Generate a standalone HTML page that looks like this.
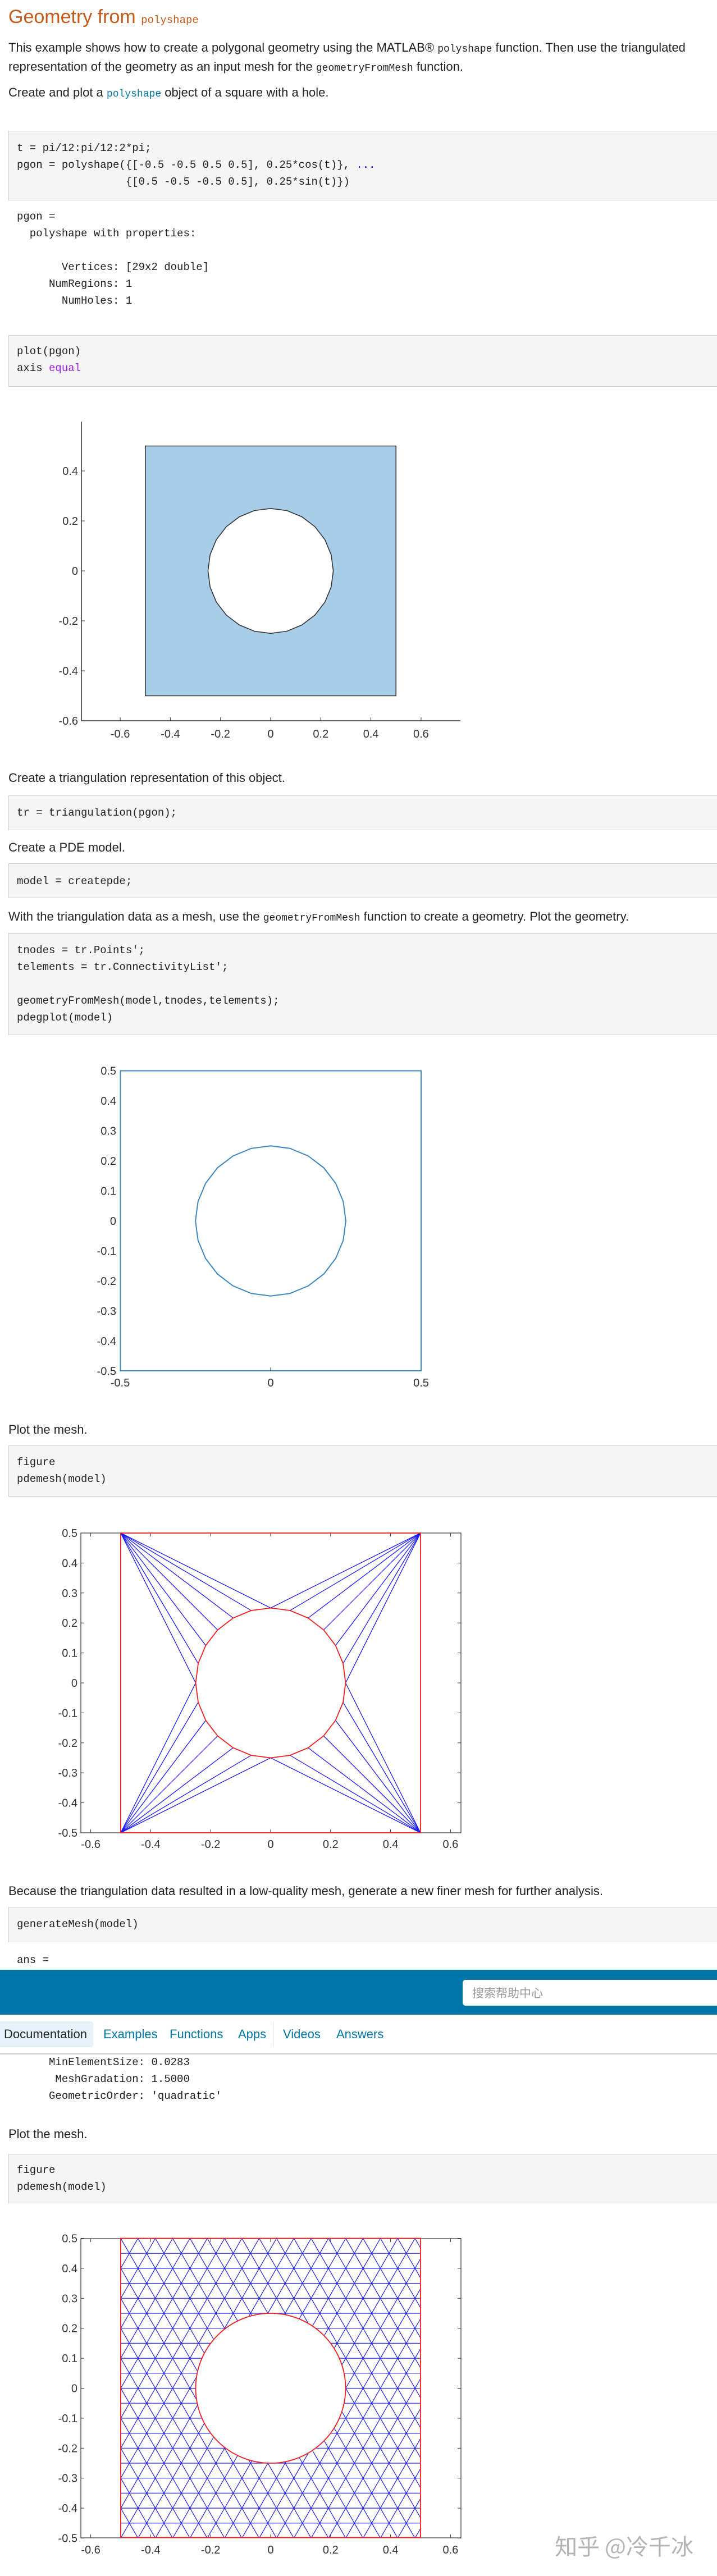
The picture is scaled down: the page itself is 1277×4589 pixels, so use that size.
<!DOCTYPE html>
<html><head><meta charset="utf-8">
<style>
*{margin:0;padding:0;box-sizing:border-box}
html,body{width:1277px;height:4589px;background:#fff;overflow:hidden}
body{position:relative;font-family:"Liberation Sans","Noto Sans CJK SC",sans-serif;color:#222}
.t{position:absolute;left:15px;font-size:22px;line-height:30px;white-space:nowrap}
.m{font-family:"Liberation Mono",monospace;font-size:18px}
.box{position:absolute;left:15px;width:1300px;background:#f5f5f5;border:1px solid #cfcfcf}
.c{position:absolute;left:30px;font-family:"Liberation Mono",monospace;font-size:19px;line-height:30px;white-space:pre;color:#222}
#svg{position:absolute;left:0;top:0}
</style></head><body>

<div style="position:absolute;left:15px;top:8px;font-size:34px;line-height:44px;color:#c45a1a;white-space:nowrap">Geometry from <span style="font-family:'Liberation Mono',monospace;font-size:19px">polyshape</span></div>
<div class="t" style="top:70px">This example shows how to create a polygonal geometry using the MATLAB® <span class="m">polyshape</span> function. Then use the triangulated</div>
<div class="t" style="top:104px">representation of the geometry as an input mesh for the <span class="m">geometryFromMesh</span> function.</div>
<div class="t" style="top:150px">Create and plot a <span class="m" style="color:#0076a8">polyshape</span> object of a square with a hole.</div>

<div class="box" style="top:233px;height:124px"></div>
<div class="c" style="top:249px">t = pi/12:pi/12:2*pi;
pgon = polyshape({[-0.5 -0.5 0.5 0.5], 0.25*cos(t)}, <span style="color:#0000ff">...</span>
                 {[0.5 -0.5 -0.5 0.5], 0.25*sin(t)})</div>
<div class="c" style="top:371px">pgon = 
  polyshape with properties:

       Vertices: [29x2 double]
     NumRegions: 1
       NumHoles: 1</div>

<div class="box" style="top:597px;height:92px"></div>
<div class="c" style="top:611px">plot(pgon)
axis <span style="color:#a020f0">equal</span></div>

<div class="t" style="top:1371px">Create a triangulation representation of this object.</div>
<div class="box" style="top:1417px;height:62px"></div>
<div class="c" style="top:1433px">tr = triangulation(pgon);</div>
<div class="t" style="top:1495px">Create a PDE model.</div>
<div class="box" style="top:1538px;height:62px"></div>
<div class="c" style="top:1555px">model = createpde;</div>
<div class="t" style="top:1618px">With the triangulation data as a mesh, use the <span class="m">geometryFromMesh</span> function to create a geometry. Plot the geometry.</div>
<div class="box" style="top:1662px;height:182px"></div>
<div class="c" style="top:1678px">tnodes = tr.Points';
telements = tr.ConnectivityList';

geometryFromMesh(model,tnodes,telements);
pdegplot(model)</div>

<div class="t" style="top:2532px">Plot the mesh.</div>
<div class="box" style="top:2575px;height:91px"></div>
<div class="c" style="top:2590px">figure
pdemesh(model)</div>

<div class="t" style="top:3354px">Because the triangulation data resulted in a low-quality mesh, generate a new finer mesh for further analysis.</div>
<div class="box" style="top:3397px;height:63px"></div>
<div class="c" style="top:3413px">generateMesh(model)</div>
<div class="c" style="top:3477px">ans = </div>

<div style="position:absolute;left:0;top:3509px;width:1277px;height:80px;background:#0076a8"></div>
<div style="position:absolute;left:824px;top:3527px;width:470px;height:46px;background:#fff;border-radius:5px"></div>
<div style="position:absolute;left:841px;top:3535px;font-size:21px;line-height:30px;color:#999;font-family:'Noto Sans CJK SC',sans-serif">搜索帮助中心</div>
<div style="position:absolute;left:0;top:3589px;width:1277px;height:69px;background:#fff"></div>
<div style="position:absolute;left:0;top:3601px;width:166px;height:46px;background:#e6f2fa;border-radius:0 4px 4px 0"></div>
<div style="position:absolute;left:486px;top:3601px;width:1px;height:46px;background:#e0e0e0"></div>
<div style="position:absolute;top:3609px;left:7px;font-size:22px;line-height:30px;color:#222;white-space:nowrap">Documentation</div>
<div style="position:absolute;top:3609px;left:184px;font-size:22px;line-height:30px;color:#0076a8">Examples</div>
<div style="position:absolute;top:3609px;left:302px;font-size:22px;line-height:30px;color:#0076a8">Functions</div>
<div style="position:absolute;top:3609px;left:424px;font-size:22px;line-height:30px;color:#0076a8">Apps</div>
<div style="position:absolute;top:3609px;left:504px;font-size:22px;line-height:30px;color:#0076a8">Videos</div>
<div style="position:absolute;top:3609px;left:599px;font-size:22px;line-height:30px;color:#0076a8">Answers</div>
<div style="position:absolute;left:0;top:3657px;width:1277px;height:4px;background:linear-gradient(#c8c8c8,#f4f4f4)"></div>
<div class="c" style="top:3659px">     MinElementSize: 0.0283
      MeshGradation: 1.5000
     GeometricOrder: 'quadratic'</div>

<div class="t" style="top:3787px">Plot the mesh.</div>
<div class="box" style="top:3837px;height:88px"></div>
<div class="c" style="top:3851px">figure
pdemesh(model)</div>

<svg id="svg" width="1277" height="4589" xmlns="http://www.w3.org/2000/svg" font-family="Liberation Sans, sans-serif">
<defs>
<clipPath id="sq4"><rect x="215" y="3988" width="534" height="533"/></clipPath>
</defs>
<g id="g1"></g>
<text x="1235" y="4551" text-anchor="end" font-size="40" fill="#b4b4b4" font-family="Noto Sans CJK SC, sans-serif">知乎 @冷千冰</text>
</svg>

<script>
(function(){
var NS="http://www.w3.org/2000/svg",g=document.getElementById('g1'),out=[];
function L(x1,y1,x2,y2,c,w){out.push('<line x1="'+x1.toFixed(1)+'" y1="'+y1.toFixed(1)+'" x2="'+x2.toFixed(1)+'" y2="'+y2.toFixed(1)+'" stroke="'+c+'" stroke-width="'+w+'"/>');}
function T(x,y,s,a){out.push('<text x="'+x+'" y="'+y+'" font-size="20" fill="#333" text-anchor="'+a+'">'+s+'</text>');}
function fmt(v){v=Math.round(v*10)/10;if(v==0)return'0';return v.toFixed(1);}
var circ=[];for(var k=1;k<=24;k++){var t=k*Math.PI/12;circ.push([0.25*Math.cos(t),0.25*Math.sin(t)]);}
// Plot 1
var X=function(x){return 482+x*446.5},Y=function(y){return 1017-y*445};
var d='M'+X(-.5)+','+Y(.5)+'L'+X(.5)+','+Y(.5)+'L'+X(.5)+','+Y(-.5)+'L'+X(-.5)+','+Y(-.5)+'Z M';
d+=circ.map(function(p){return X(p[0]).toFixed(1)+','+Y(p[1]).toFixed(1)}).join('L')+'Z';
out.push('<path d="'+d+'" fill="#a7cde9" fill-rule="evenodd" stroke="#333" stroke-width="1.6"/>');
L(145,751,145,1284,'#333',1.5);L(145,1284,820,1284,'#333',1.5);
for(var v=-0.6;v<=0.41;v+=0.2){L(145,Y(v),151,Y(v),'#333',1);T(139,Y(v)+7,fmt(v),'end');}
for(var v=-0.6;v<=0.61;v+=0.2){L(X(v),1284,X(v),1278,'#333',1);T(X(v),1314,fmt(v),'middle');}
// Plot 2
X=function(x){return 482+x*535.5};Y=function(y){return 2175-y*535};
out.push('<rect x="214.5" y="1907.5" width="535.5" height="534.5" fill="none" stroke="#3a87c0" stroke-width="2"/>');
out.push('<path d="M'+circ.map(function(p){return X(p[0]).toFixed(1)+','+Y(p[1]).toFixed(1)}).join('L')+'Z" fill="none" stroke="#3a87c0" stroke-width="2"/>');
for(var i=-5;i<=5;i++){T(207,Y(i/10)+7,fmt(i/10),'end');}
L(482,2442,482,2436,'#333',1);
T(214,2470,'-0.5','middle');T(482,2470,'0','middle');T(750,2470,'0.5','middle');
// axes helper for plots 3,4
function axes(cy,top,bot,ly){
  X=function(x){return 482+x*534};Y=function(y){return cy-y*534};
  out.push('<rect x="144" y="'+top+'" width="677" height="'+(bot-top)+'" fill="none" stroke="#333" stroke-width="1.2"/>');
  for(var i=-5;i<=5;i++){var yy=Y(i/10);L(144,yy,150,yy,'#333',1);L(821,yy,815,yy,'#333',1);T(138,yy+7,fmt(i/10),'end');}
  for(var i=-3;i<=3;i++){var xx=X(i/5);L(xx,bot,xx,bot-6,'#333',1);L(xx,top,xx,top+6,'#333',1);T(xx,ly,fmt(i/5),'middle');}
}
// Plot 3
axes(2998,2731,3265,3292);
var corners=[[-.5,.5,90,180],[.5,.5,0,90],[-.5,-.5,180,270],[.5,-.5,270,360]];
corners.forEach(function(c){for(var a=c[2];a<=c[3];a+=15){var r=a*Math.PI/180;L(X(c[0]),Y(c[1]),X(0.25*Math.cos(r)),Y(0.25*Math.sin(r)),'#1a1aff',1.3);}});
out.push('<path d="M'+circ.map(function(p){return X(p[0]).toFixed(1)+','+Y(p[1]).toFixed(1)}).join('L')+'Z" fill="none" stroke="#f02020" stroke-width="1.8"/>');
out.push('<rect x="'+X(-.5)+'" y="'+Y(.5)+'" width="534" height="534" fill="none" stroke="#f02020" stroke-width="1.8"/>');
// Plot 4
axes(4254.5,3988,4521,4549);
var h=0.05,s=2*h/Math.sqrt(3),mesh=[];
for(var k=0;k<=20;k++){var yy=0.5-k*h;mesh.push([X(-.5),Y(yy),X(.5),Y(yy)]);}
for(var j=-40;j<=40;j++){var x0=-0.5+j*s;mesh.push([X(x0),Y(.5),X(x0+1/Math.sqrt(3)),Y(-.5)]);mesh.push([X(x0),Y(.5),X(x0-1/Math.sqrt(3)),Y(-.5)]);}
out.push('<g clip-path="url(#sq4)">');
mesh.forEach(function(m){L(m[0],m[1],m[2],m[3],'#2020e8',1.2);});
out.push('</g>');
out.push('<circle cx="'+X(0)+'" cy="'+Y(0)+'" r="133.5" fill="#fff" stroke="#f02020" stroke-width="1.8"/>');
out.push('<rect x="'+X(-.5)+'" y="'+Y(.5)+'" width="534" height="533" fill="none" stroke="#f02020" stroke-width="1.8"/>');
g.innerHTML=out.join('');
})();
</script>
</body></html>
